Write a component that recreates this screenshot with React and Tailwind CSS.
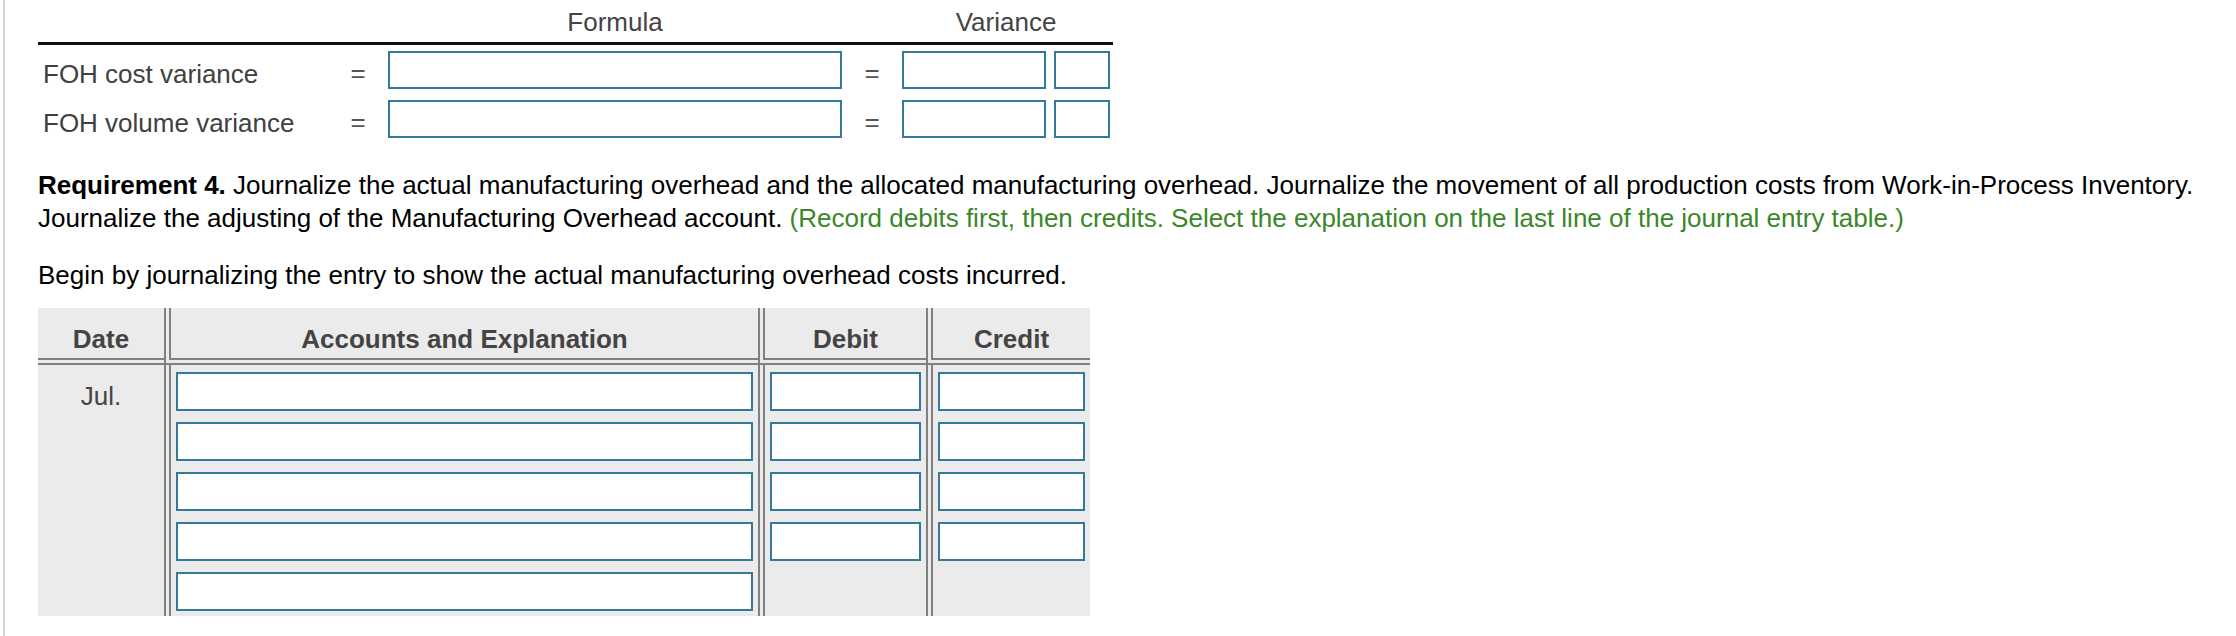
import React from 'react';

const box = "bg-white border-2 border-[#34789a]";

const VarianceRow = ({ label, className = "" }) => (
  <div className={`flex items-center h-[38px] ${className}`}>
    <div className="w-[300px] pl-[5px] pt-[9px] text-[#404040]">{label}</div>
    <div className="w-[40px] pt-[7px] text-center text-[#555]">=</div>
    <div className={`${box} ml-[10px] w-[454px] h-[38px]`} />
    <div className="w-[60px] pt-[7px] text-center text-[#555]">=</div>
    <div className={`${box} w-[144px] h-[38px]`} />
    <div className={`${box} ml-[8px] w-[56px] h-[38px]`} />
  </div>
);

const Inputs = ({ count }) => (
  <div className="flex flex-col gap-[11px] pt-[7px] pb-[5px] pl-[5px] pr-[5px]">
    {Array.from({ length: count }).map((_, i) => (
      <div key={i} className={`${box} h-[39px] w-full`} />
    ))}
  </div>
);

export default function App() {
  return (
    <div className="min-h-screen ml-[3px] border-l-2 border-[#d2d2e2] bg-white pl-[33px] pt-[7px] text-[26px] font-['Liberation_Sans',Arial,Helvetica,sans-serif]">
      {/* variance formulas */}
      <div className="w-[1075px]">
        <div className="flex h-[38px] leading-[30px] border-b-[3px] border-[#111] text-[#444]">
          <div className="w-[350px]" />
          <div className="w-[454px] text-center">Formula</div>
          <div className="w-[60px]" />
          <div className="w-[208px] text-center">Variance</div>
        </div>
        <VarianceRow label="FOH cost variance" className="mt-[6px]" />
        <VarianceRow label="FOH volume variance" className="mt-[11px]" />
      </div>

      <p className="mt-[31px] pr-[20px] leading-[33px] text-black">
        <b>Requirement 4.</b> Journalize the actual manufacturing overhead and the allocated manufacturing overhead. Journalize the movement of all production costs from Work-in-Process Inventory. Journalize the adjusting of the Manufacturing Overhead account.{" "}
        <span className="text-[#3a8728]">(Record debits first, then credits. Select the explanation on the last line of the journal entry table.)</span>
      </p>

      <p className="mt-[24px] leading-[33px] text-black">
        Begin by journalizing the entry to show the actual manufacturing overhead costs incurred.
      </p>

      {/* journal entry table */}
      <div className="mt-[16px] w-[1052px] grid grid-cols-[126px_594px_168px_164px] bg-[#ebebeb] text-[#444]">
        <div className="h-[57px] pt-[16px] leading-[30px] text-center font-bold border-b-[7px] border-double border-[#808080]">Date</div>
        <div className="h-[57px] pt-[16px] leading-[30px] text-center font-bold border-b-[7px] border-l-[7px] border-double border-[#808080]">Accounts and Explanation</div>
        <div className="h-[57px] pt-[16px] leading-[30px] text-center font-bold border-b-[7px] border-l-[7px] border-double border-[#808080]">Debit</div>
        <div className="h-[57px] pt-[16px] leading-[30px] text-center font-bold border-b-[7px] border-l-[7px] border-double border-[#808080]">Credit</div>

        <div className="pt-[16px] leading-[30px] text-center">Jul.</div>
        <div className="border-l-[7px] border-double border-[#808080]">
          <Inputs count={5} />
        </div>
        <div className="border-l-[7px] border-double border-[#808080]">
          <Inputs count={4} />
        </div>
        <div className="border-l-[7px] border-double border-[#808080]">
          <Inputs count={4} />
        </div>
      </div>
    </div>
  );
}
